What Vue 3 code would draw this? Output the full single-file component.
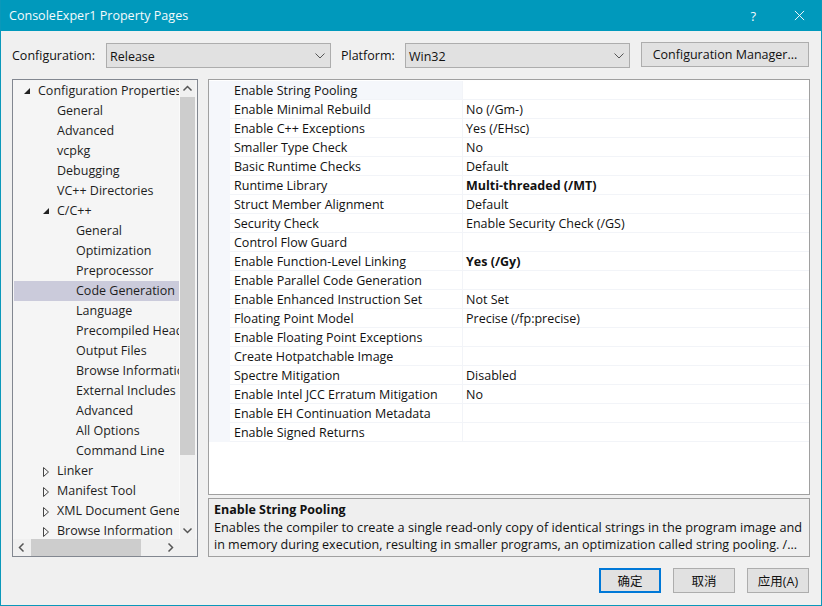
<script setup>
const tree = [
  { t: 'Configuration Properties', lvl: 0, arrow: 'open' },
  { t: 'General', lvl: 1 }, { t: 'Advanced', lvl: 1 }, { t: 'vcpkg', lvl: 1 }, { t: 'Debugging', lvl: 1 }, { t: 'VC++ Directories', lvl: 1 },
  { t: 'C/C++', lvl: 1, arrow: 'open' },
  { t: 'General', lvl: 2 }, { t: 'Optimization', lvl: 2 }, { t: 'Preprocessor', lvl: 2 }, { t: 'Code Generation', lvl: 2, sel: true }, { t: 'Language', lvl: 2 }, { t: 'Precompiled Headers', lvl: 2 }, { t: 'Output Files', lvl: 2 }, { t: 'Browse Information', lvl: 2 }, { t: 'External Includes', lvl: 2 }, { t: 'Advanced', lvl: 2 }, { t: 'All Options', lvl: 2 }, { t: 'Command Line', lvl: 2 },
  { t: 'Linker', lvl: 1, arrow: 'closed' }, { t: 'Manifest Tool', lvl: 1, arrow: 'closed' }, { t: 'XML Document Generator', lvl: 1, arrow: 'closed' }, { t: 'Browse Information', lvl: 1, arrow: 'closed' }
]
const rows = [
  ['Enable String Pooling', ''], ['Enable Minimal Rebuild', 'No (/Gm-)'], ['Enable C++ Exceptions', 'Yes (/EHsc)'], ['Smaller Type Check', 'No'], ['Basic Runtime Checks', 'Default'], ['Runtime Library', 'Multi-threaded (/MT)', true], ['Struct Member Alignment', 'Default'], ['Security Check', 'Enable Security Check (/GS)'], ['Control Flow Guard', ''], ['Enable Function-Level Linking', 'Yes (/Gy)', true], ['Enable Parallel Code Generation', ''], ['Enable Enhanced Instruction Set', 'Not Set'], ['Floating Point Model', 'Precise (/fp:precise)'], ['Enable Floating Point Exceptions', ''], ['Create Hotpatchable Image', ''], ['Spectre Mitigation', 'Disabled'], ['Enable Intel JCC Erratum Mitigation', 'No'], ['Enable EH Continuation Metadata', ''], ['Enable Signed Returns', '']
]
</script>

<template>
  <div class="window">
    <header class="titlebar">
      <span class="title">ConsoleExper1 Property Pages</span>
      <span class="help">?</span>
      <svg class="close" width="12" height="12" viewBox="0 0 12 12"><path d="M1 1 11 11M11 1 1 11" stroke="#fff" stroke-width="1" fill="none"/></svg>
    </header>
    <div class="content">
      <div class="toolbar">
        <span class="lbl cfg">Configuration:</span>
        <div class="select"><span>Release</span><svg width="10" height="6" viewBox="0 0 10 6"><path d="M.5.5 5 5 9.500.5" stroke="#555" fill="none"/></svg></div>
        <span class="lbl plat">Platform:</span>
        <div class="select"><span>Win32</span><svg width="10" height="6" viewBox="0 0 10 6"><path d="M.5.5 5 5 9.500.5" stroke="#555" fill="none"/></svg></div>
        <button class="btn mgr">Configuration Manager...</button>
      </div>
      <div class="main">
        <div class="tree">
          <div class="tree-view">
            <div v-for="(n, i) in tree" :key="i" class="node" :class="{ sel: n.sel }">
              <span class="node-inner" :class="'lvl' + n.lvl">
                <svg v-if="n.arrow === 'open'" class="arrow" width="8" height="8" viewBox="0 0 8 8"><path d="M7 1V7H1Z" fill="#222"/></svg>
                <svg v-if="n.arrow === 'closed'" class="arrow" width="8" height="10" viewBox="0 0 8 10"><path d="M1.500.5 6.500 5 1.500 9.500Z" fill="none" stroke="#444"/></svg>
                {{ n.t }}
              </span>
            </div>
          </div>
          <div class="vscroll">
            <svg class="sb" width="15" height="17" viewBox="0 0 15 17"><path d="M3.500 10.500 7.500 6.500 11.500 10.500" stroke="#555" stroke-width="1.500" fill="none"/></svg>
            <div class="vthumb"></div>
            <svg class="sb" width="15" height="17" viewBox="0 0 15 17"><path d="M3.500 6.500 7.500 10.500 11.500 6.500" stroke="#555" stroke-width="1.500" fill="none"/></svg>
          </div>
          <div class="hscroll">
            <svg class="sb" width="17" height="17" viewBox="0 0 17 17"><path d="M10.500 4.500 6.500 8.500 10.500 12.500" stroke="#555" stroke-width="1.500" fill="none"/></svg>
            <div class="hthumb"></div>
            <svg class="sb" width="17" height="17" viewBox="0 0 17 17"><path d="M6.500 4.500 10.500 8.500 6.500 12.500" stroke="#555" stroke-width="1.500" fill="none"/></svg>
          </div>
        </div>
        <div class="right">
          <div class="grid">
            <div v-for="(r, i) in rows" :key="i" class="row">
              <div class="stripe"></div>
              <div class="name" :class="{ first: i === 0 }">{{ r[0] }}</div>
              <div class="val" :class="{ bold: r[2] }">{{ r[1] }}</div>
            </div>
          </div>
          <div class="desc">
            <div class="desc-title">Enable String Pooling</div>
            <div class="line1">Enables the compiler to create a single read-only copy of identical strings in the program image and</div>
            <div class="line2">in memory during execution, resulting in smaller programs, an optimization called string pooling. /...</div>
          </div>
        </div>
      </div>
      <div class="footer">
        <button class="btn act primary">确定</button>
        <button class="btn act">取消</button>
        <button class="btn act">应用(A)</button>
      </div>
    </div>
  </div>
</template>

<style>
html, body { margin: 0; }
</style>

<style scoped>
.window {
  width: 822px; height: 606px; box-sizing: border-box;
  background: #f0f0f0; border: 1px solid #0a98ba; border-top: 0;
  display: flex; flex-direction: column;
  font-family: "Open Sans", "Noto Sans CJK SC", sans-serif; font-size: 12.5px; color: #111;
  overflow: hidden;
}
.titlebar {
  height: 31px; flex: none; background: #0099bc; color: #f4fbfd;
  display: flex; align-items: center; padding: 0 17px 0 9px;
  margin: 0 -1px;
  font-size: 12.56px;
}
.title { flex: 1; }
.help { margin-right: 38px; font-size: 13px; }
.close { width: 11px; height: 11px; }
.content { flex: 1; display: flex; flex-direction: column; padding: 11px 11px 12px; min-height: 0; }
.toolbar { display: flex; align-items: flex-end; height: 26px; flex: none; }
.lbl { flex: none; align-self: center; position: relative; top: 0; }
.cfg { width: 94px; }
.plat { width: 64px; margin-left: 10px; }
.select {
  width: 225px; height: 25px; box-sizing: border-box; background: #e1e1e1; border: 1px solid #adadad;
  display: flex; align-items: center; justify-content: space-between; padding: 1px 5px 0 3px; flex: none;
}
.select svg { margin-top: -1px; }
.btn {
  box-sizing: border-box; background: #e1e1e1; border: 1px solid #adadad; font: inherit; color: #111; padding: 0;
}
.mgr { width: 168px; height: 25px; margin-left: 11px; align-self: flex-start; }
.main { display: flex; gap: 10px; height: 478px; margin-top: 11px; flex: none; }
.tree {
  width: 186px; box-sizing: border-box; border: 1px solid #828790; background: #f5f5f5;
  display: grid; grid-template-columns: 1fr 15px 2px; grid-template-rows: 1fr 17px; overflow: hidden;
}
.tree-view { overflow: hidden; padding-top: 1px; min-width: 0; border-right: 1px solid #fafafa; }
.node { height: 20px; line-height: 20px; white-space: nowrap; overflow: hidden; margin-left: 1px; color: #1e1e1e; }
.node.sel { background: #cbcbdb; }
.node-inner { display: block; position: relative; }
.lvl0 { padding-left: 24px; }
.lvl1 { padding-left: 43px; }
.lvl2 { padding-left: 62px; }
.arrow { position: absolute; top: 6px; }
.lvl0 .arrow { left: 9px; }
.lvl1 .arrow { left: 28px; }
.vscroll { display: flex; flex-direction: column; background: #f0f0f0; }
.sb { display: block; flex: none; }
.vthumb { height: 358px; background: #cdcdcd; }
.vscroll .sb:last-child { margin-top: auto; }
.hscroll { grid-column: 1 / 4; display: flex; align-items: center; padding-right: 18px; padding-left: 0; background: #f0f0f0; }
.hthumb { width: 110px; height: 17px; margin-left: 1px; background: #cdcdcd; }
.hscroll .sb:last-child { margin-left: auto; }
.right { flex: 1; display: flex; flex-direction: column; gap: 3px; min-width: 0; }
.grid { height: 416px; flex: none; box-sizing: border-box; background: #fff; border: 1px solid #a0a0a0; padding-top: 1px; overflow: hidden; }
.row { display: flex; height: 19px; box-sizing: border-box; line-height: 20px; border-bottom: 1px solid #f2f4f8; }
.stripe { width: 21px; background: #f5f7fb; flex: none; margin-bottom: -1px; }
.name { width: 233px; padding-left: 4px; box-sizing: border-box; border-right: 1px solid #f2f4f8; flex: none; }
.name.first { background: #f5f7fb; }
.val { padding-left: 3px; flex: 1; }
.bold { font-weight: 700; }
.desc { height: 59px; flex: none; box-sizing: border-box; border: 1px solid #a0a0a0; padding: 2px 5px; background: #efefef; line-height: 17px; white-space: nowrap; }
.desc-title { font-weight: 700; margin-bottom: 1px; }
.line1 { font-size: 12.72px; }
.line2 { font-size: 12.56px; }
.footer { display: flex; justify-content: flex-end; gap: 12px; margin-top: 11px; padding-right: 1px; }
.act { width: 62px; height: 25px; }
.primary { border: 2px solid #0078d7; }
</style>
